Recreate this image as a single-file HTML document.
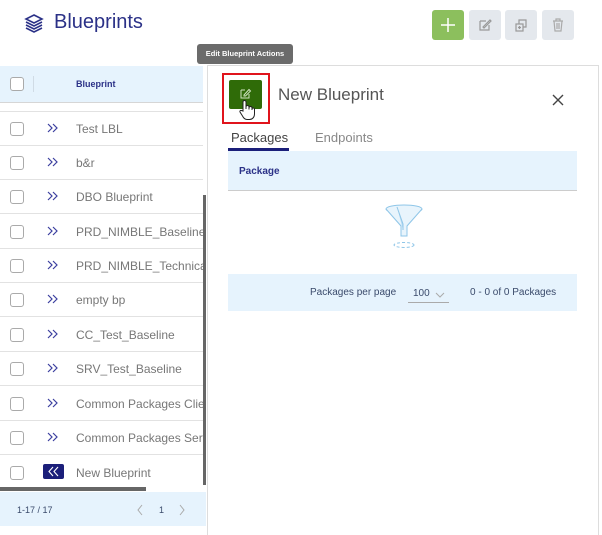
<!DOCTYPE html>
<html><head><meta charset="utf-8"><style>
*{box-sizing:border-box;margin:0;padding:0}
body{width:602px;height:526px;overflow:hidden;background:#fff;font-family:"Liberation Sans",sans-serif;position:relative;color:#666}
.a{position:absolute}
.cb{position:absolute;left:10px;width:14px;height:14px;border:1px solid #aaa;border-radius:3px;background:#fff}
.row{position:absolute;left:0;width:203px;height:34px;border-bottom:1px solid #e2e2e2;overflow:hidden}
.row .t{position:absolute;left:76px;top:10px;font-size:12px;color:#777;white-space:nowrap}
.row .ch{position:absolute;left:47px;top:11px}
.btn{position:absolute;top:10px;width:32px;height:30px;border-radius:3px;background:#e4e8ed}
</style></head><body>
<svg class="a" style="left:24px;top:13px" width="20" height="22" viewBox="0 0 20 22" fill="none" stroke="#2b3187" stroke-width="1.6"><path d="M10 2L18 6L10 10L2 6Z"/><path d="M2 9L10 13L18 9"/><path d="M2 12L10 16L18 12"/><path d="M2 15L10 19L18 15"/></svg>
<div class="a" style="left:54px;top:11px;font-size:20px;color:#2b3187">Blueprints</div>
<div class="btn" style="left:432px;background:#8cbf5d"><svg width="32" height="30"><path d="M16 8V22M9 15H23" stroke="#fff" stroke-width="1.5"/></svg></div>
<div class="btn" style="left:469px"><svg width="32" height="30" fill="none" stroke="#999" stroke-width="1.2"><path d="M11 11H17M11 11V20H20V15"/><path d="M14 17L21 10L22 11L15 18Z"/></svg></div>
<div class="btn" style="left:505px"><svg width="32" height="30" fill="none" stroke="#999" stroke-width="1.2"><rect x="11" y="14" width="7" height="7"/><path d="M14 14V10H21V17H18"/><path d="M14.5 16V19M13 17.5H16"/></svg></div>
<div class="btn" style="left:542px"><svg width="32" height="30" fill="none" stroke="#aaa" stroke-width="1.2"><path d="M11 11H21M14 11V9H18V11M12 11L13 21H19L20 11M15 13V19M17 13V19"/></svg></div>
<div class="a" style="left:0;top:66px;width:203px;height:37px;background:#e6f3fd;border-bottom:1px solid #d6d6d6"></div>
<div class="cb" style="top:77px"></div>
<div class="a" style="left:33px;top:76px;width:1px;height:16px;background:#d0dbe5"></div>
<div class="a" style="left:76px;top:79px;font-size:9px;font-weight:bold;color:#2b3187">Blueprint</div>
<div class="a" style="left:0;top:103px;width:203px;height:9px;border-bottom:1px solid #e2e2e2"></div>
<svg width="0" height="0" style="position:absolute"><defs><g id="cv" fill="none" stroke="#3b3f9f" stroke-width="1.2"><path d="M1 1L5 5L1 9M6 1L10 5L6 9"/></g></defs></svg>
<div class="row" style="top:112px"><div class="cb" style="top:10px"></div><svg class="ch" width="12" height="10"><use href="#cv"/></svg><div class="t">Test LBL</div></div>
<div class="row" style="top:146px"><div class="cb" style="top:10px"></div><svg class="ch" width="12" height="10"><use href="#cv"/></svg><div class="t">b&amp;r</div></div>
<div class="row" style="top:180px"><div class="cb" style="top:10px"></div><svg class="ch" width="12" height="10"><use href="#cv"/></svg><div class="t">DBO Blueprint</div></div>
<div class="row" style="top:215px"><div class="cb" style="top:10px"></div><svg class="ch" width="12" height="10"><use href="#cv"/></svg><div class="t">PRD_NIMBLE_Baseline</div></div>
<div class="row" style="top:249px"><div class="cb" style="top:10px"></div><svg class="ch" width="12" height="10"><use href="#cv"/></svg><div class="t">PRD_NIMBLE_Technica</div></div>
<div class="row" style="top:283px"><div class="cb" style="top:10px"></div><svg class="ch" width="12" height="10"><use href="#cv"/></svg><div class="t">empty bp</div></div>
<div class="row" style="top:318px"><div class="cb" style="top:10px"></div><svg class="ch" width="12" height="10"><use href="#cv"/></svg><div class="t">CC_Test_Baseline</div></div>
<div class="row" style="top:352px"><div class="cb" style="top:10px"></div><svg class="ch" width="12" height="10"><use href="#cv"/></svg><div class="t">SRV_Test_Baseline</div></div>
<div class="row" style="top:387px"><div class="cb" style="top:10px"></div><svg class="ch" width="12" height="10"><use href="#cv"/></svg><div class="t">Common Packages Clie</div></div>
<div class="row" style="top:421px"><div class="cb" style="top:10px"></div><svg class="ch" width="12" height="10"><use href="#cv"/></svg><div class="t">Common Packages Serv</div></div>
<div class="row" style="top:456px;border:none"><div class="cb" style="top:10px"></div><div class="a" style="left:43px;top:8px;width:21px;height:15px;background:#1b1f7a;border-radius:2px"><svg width="21" height="15" fill="none" stroke="#fff" stroke-width="1.1"><path d="M10 3L6 7.5L10 12M15 3L11 7.5L15 12"/></svg></div><div class="t">New Blueprint</div></div>
<div class="a" style="left:0;top:487px;width:146px;height:4px;background:#666"></div>
<div class="a" style="left:203px;top:195px;width:3px;height:290px;background:#666"></div>
<div class="a" style="left:0;top:492px;width:206px;height:34px;background:#e6f3fd"></div>
<div class="a" style="left:17px;top:505px;font-size:9px;color:#3a4a6b">1-17 / 17</div>
<svg class="a" style="left:136px;top:504px" width="8" height="12" fill="none" stroke="#aaa"><path d="M6 1L2 6L6 11"/></svg>
<div class="a" style="left:159px;top:505px;font-size:9px;color:#3a4a6b">1</div>
<svg class="a" style="left:178px;top:504px" width="8" height="12" fill="none" stroke="#aaa"><path d="M2 1L6 6L2 11"/></svg>
<div class="a" style="left:207px;top:65px;width:392px;height:470px;border:1px solid #ddd;border-bottom:none"></div>
<div class="a" style="left:197px;top:44px;width:96px;height:20px;background:#6b6b6b;border-radius:3px;color:#fff;font-size:7.5px;font-weight:bold;line-height:20px;text-align:center">Edit Blueprint Actions</div>
<div class="a" style="left:222px;top:73px;width:48px;height:51px;border:2px solid #e0141c"></div>
<div class="a" style="left:229px;top:80px;width:33px;height:29px;background:#2f6b08;border-radius:2px"><svg width="33" height="29" fill="none" stroke="#cfe3c0" stroke-width="1"><path d="M12 10H16M12 10V18H20V14"/><path d="M15 15L20 9.5L21.5 11L16.5 16L15 16Z"/></svg></div>
<svg class="a" style="left:239px;top:99px" width="16" height="22" viewBox="0 0 16 22"><path d="M4 12V3a1.5 1.5 0 0 1 3 0V10V8a1.5 1.5 0 0 1 3 0V10.5V9a1.5 1.5 0 0 1 3 0V11V10a1.3 1.3 0 0 1 2.5 0V15C15.5 18 13.5 20.5 10.5 20.5H8C6 20.5 4.5 19 3.5 17L1 13C0.5 12 1.5 11 2.5 11.5Z" fill="#fff" stroke="#222" stroke-width="1"/></svg>
<div class="a" style="left:278px;top:85px;font-size:17px;color:#555">New Blueprint</div>
<svg class="a" style="left:551px;top:93px" width="14" height="14"><path d="M2 2L12 12M12 2L2 12" stroke="#444" stroke-width="1.4"/></svg>
<div class="a" style="left:231px;top:130px;font-size:13px;color:#444">Packages</div>
<div class="a" style="left:228px;top:148px;width:61px;height:3px;background:#1b1f7a"></div>
<div class="a" style="left:315px;top:130px;font-size:13px;color:#888">Endpoints</div>
<div class="a" style="left:228px;top:151px;width:349px;height:40px;background:#e6f3fd;border-bottom:1px solid #ccc"></div>
<div class="a" style="left:239px;top:166px;font-size:10px;font-weight:bold;color:#2b3187">Package</div>
<svg class="a" style="left:383px;top:204px" width="42" height="46" fill="none" stroke="#8fc6e8" stroke-width="1"><ellipse cx="21" cy="5" rx="18" ry="4" fill="#e8f4fc"/><path d="M3 5L18 22V32H24V22L39 5" fill="#e8f4fc"/><path d="M14 3L20 20V26" fill="#b7dbf3"/><ellipse cx="21" cy="41" rx="10" ry="2.5" stroke-dasharray="3 2"/></svg>
<div class="a" style="left:228px;top:274px;width:349px;height:37px;background:#e6f3fd"></div>
<div class="a" style="left:310px;top:287px;font-size:10px;color:#3a4a6b">Packages per page</div>
<div class="a" style="left:413px;top:288px;font-size:10px;color:#3a4a6b">100</div>
<svg class="a" style="left:435px;top:292px" width="10" height="6" fill="none" stroke="#aaa"><path d="M1 1L5 5L9 1"/></svg>
<div class="a" style="left:408px;top:302px;width:41px;height:1px;background:#aaa"></div>
<div class="a" style="left:470px;top:287px;font-size:10px;color:#3a4a6b">0 - 0 of 0 Packages</div>
</body></html>
